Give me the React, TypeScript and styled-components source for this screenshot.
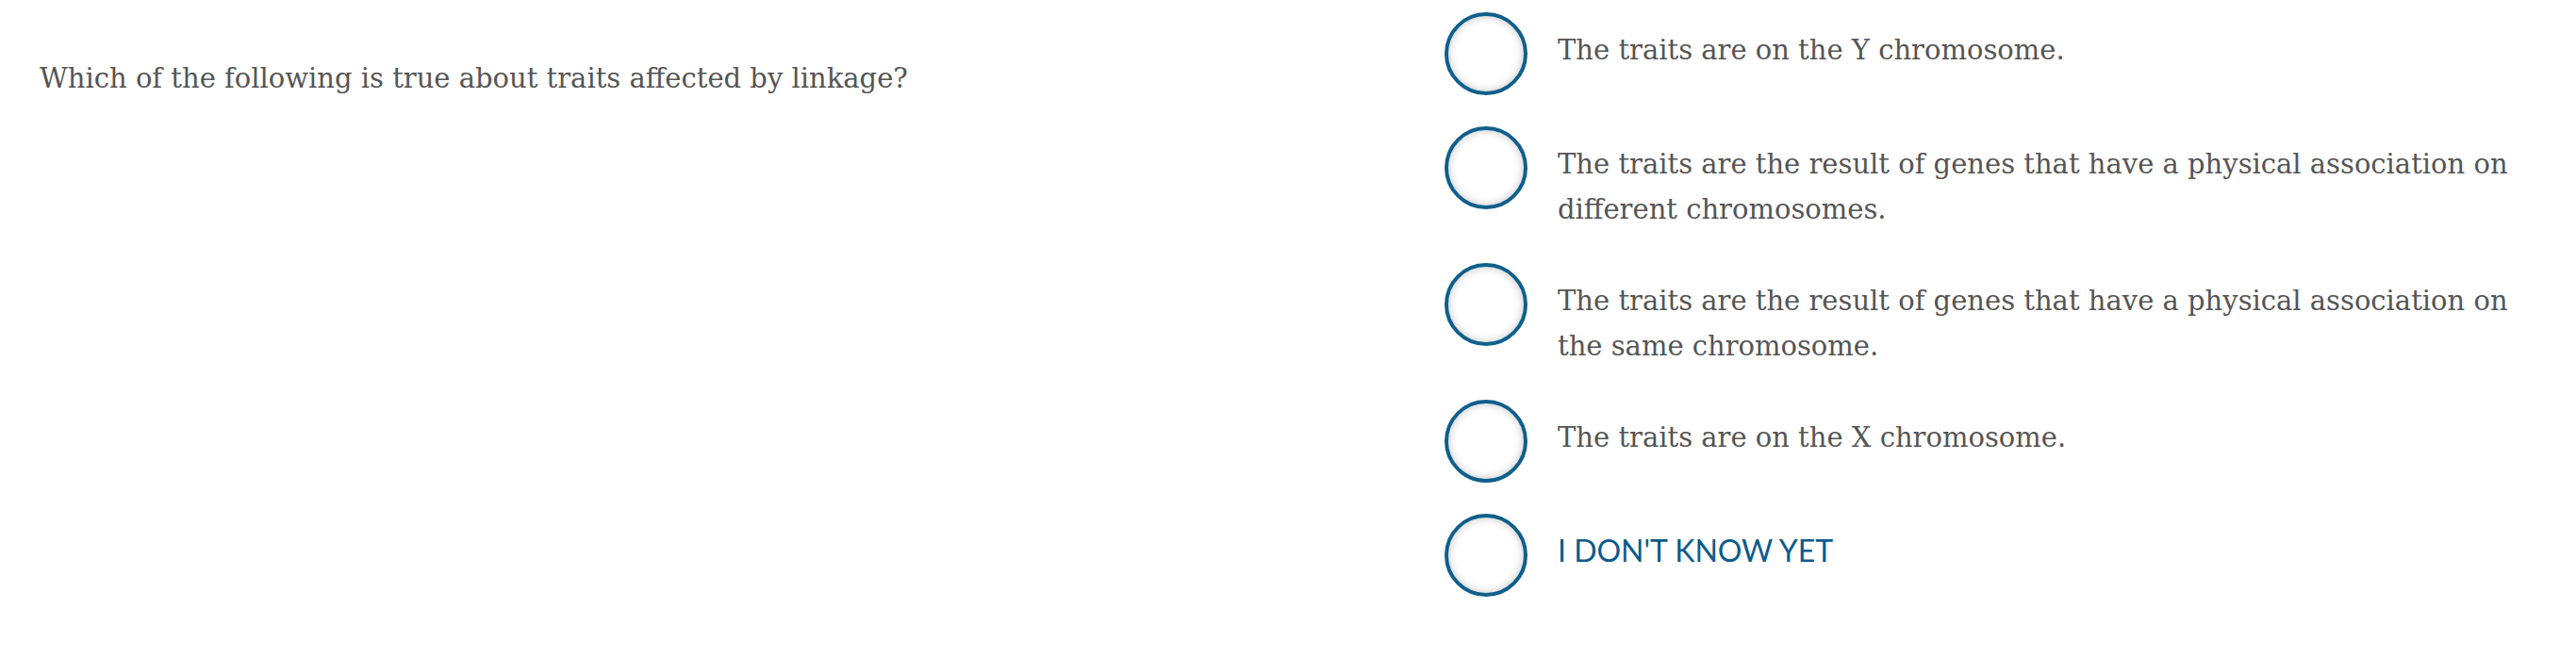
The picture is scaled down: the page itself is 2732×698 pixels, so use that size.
import React from "react";
import styled, { createGlobalStyle } from "styled-components";

const GlobalStyle = createGlobalStyle`
  html, body {
    margin: 0;
    padding: 0;
    background: #ffffff;
  }
`;

const options = [
  "The traits are on the Y chromosome.",
  "The traits are the result of genes that have a physical association on different chromosomes.",
  "The traits are the result of genes that have a physical association on the same chromosome.",
  "The traits are on the X chromosome.",
];

const App: React.FC = () => {
  return (
    <>
      <GlobalStyle />
      <Wrapper>
        <QuestionColumn>
          <Question>Which of the following is true about traits affected by linkage?</Question>
        </QuestionColumn>
        <AnswerList>
          {options.map((text) => (
            <AnswerRow key={text}>
              <Radio type="button" aria-label={text} />
              <AnswerText>{text}</AnswerText>
            </AnswerRow>
          ))}
          <AnswerRow>
            <Radio type="button" aria-label="I don't know yet" />
            <DontKnow>I DON'T KNOW YET</DontKnow>
          </AnswerRow>
        </AnswerList>
      </Wrapper>
    </>
  );
};

export default App;

const Wrapper = styled.div`
  display: grid;
  grid-template-columns: 1532px 1fr;
  width: 2732px;
  min-height: 698px;
  padding: 13px 40px 0 0;
  box-sizing: border-box;
`;

const QuestionColumn = styled.div`
  padding: 46px 0 0 42px;
`;

const Question = styled.p`
  margin: 0;
  font-family: "DejaVu Serif", serif;
  font-size: 29px;
  line-height: 48px;
  color: #555555;
`;

const AnswerList = styled.div`
  display: flex;
  flex-direction: column;
  gap: 33px;
`;

const AnswerRow = styled.div`
  display: flex;
  align-items: flex-start;
  gap: 32px;
`;

const Radio = styled.button`
  flex: 0 0 88px;
  width: 88px;
  height: 88px;
  padding: 0;
  border: 4px solid #0f5f8c;
  border-radius: 50%;
  background: #ffffff;
  box-shadow: inset 0 0 10px rgba(0, 0, 0, 0.24);
  box-sizing: border-box;
  cursor: pointer;
`;

const AnswerText = styled.div`
  padding-top: 16px;
  font-family: "DejaVu Serif", serif;
  font-size: 29px;
  line-height: 48px;
  color: #555555;
`;

const DontKnow = styled.div`
  padding-top: 15px;
  font-family: Lato, "Open Sans", sans-serif;
  font-size: 32px;
  line-height: 48px;
  color: #0d5b8c;
`;
